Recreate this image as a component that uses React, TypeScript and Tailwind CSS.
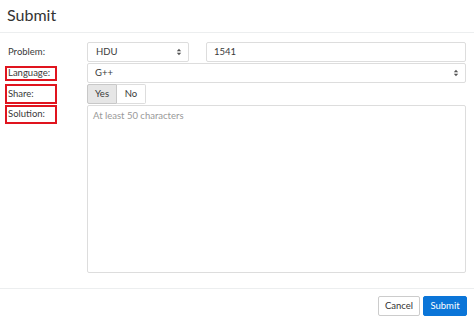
function SelectArrows() {
  return (
    <svg width="6" height="8" viewBox="0 0 6 8" className="text-[#555]">
      <path d="M0.8 3.2 L3 0.8 L5.2 3.2 Z" fill="currentColor" />
      <path d="M0.8 4.8 L3 7.2 L5.2 4.8 Z" fill="currentColor" />
    </svg>
  );
}

export default function App() {
  return (
    <div className="w-[474px] h-[323px] bg-white text-[#3a3a3a] font-['Lato',sans-serif] text-[9.5px] overflow-hidden">
      {/* Header */}
      <div className="h-[33px] border-b border-[#eceeef] px-[7px] pt-[5px]">
        <h1 className="text-[16px] leading-[20px] text-[#333]">Submit</h1>
      </div>

      {/* Body */}
      <div className="pt-[9px] pr-[8px] h-[256px] border-b border-[#eceeef]">
        {/* Problem */}
        <div className="flex items-center h-[20px]">
          <div className="w-[87px] pl-[8px]">Problem:</div>
          <div className="w-[102px] h-[20px] border border-[#ddd] rounded-[2px] flex items-center justify-between pl-[8px] pr-[6px]">
            <span>HDU</span>
            <SelectArrows />
          </div>
          <div className="ml-[17px] flex-1 h-[20px] border border-[#ddd] rounded-[2px] flex items-center pl-[7px]">
            1541
          </div>
        </div>

        {/* Language */}
        <div className="flex items-center h-[20px] mt-[1px]">
          <div className="w-[87px] pl-[5px]">
            <div className="w-[52px] h-[15px] border-2 border-[#e0141e] flex items-center pl-[1px]">Language:</div>
          </div>
          <div className="flex-1 h-[20px] border border-[#ddd] rounded-[2px] flex items-center justify-between pl-[7px] pr-[6px]">
            <span>G++</span>
            <SelectArrows />
          </div>
        </div>

        {/* Share */}
        <div className="flex items-center h-[20px] mt-[1px]">
          <div className="w-[87px] pl-[5px]">
            <div className="w-[52px] h-[20px] border-2 border-[#e0141e] flex items-center pl-[1px]">Share:</div>
          </div>
          <div className="flex h-[20px]">
            <div className="w-[30px] h-[20px] bg-[#e6e6e6] border border-[#c8c8c8] rounded-l-[2px] flex items-center justify-center">Yes</div>
            <div className="w-[29px] h-[20px] bg-white border border-l-0 border-[#ddd] rounded-r-[2px] flex items-center justify-center">No</div>
          </div>
        </div>

        {/* Solution */}
        <div className="flex items-start mt-[1px]">
          <div className="w-[87px] pl-[5px]">
            <div className="w-[52px] h-[19px] border-2 border-[#e0141e] flex items-center pl-[1px]">Solution:</div>
          </div>
          <div className="flex-1 h-[168px] border border-[#ddd] rounded-[2px] pl-[5px] pt-[3px] text-[#999]">
            At least 50 characters
          </div>
        </div>
      </div>

      {/* Footer */}
      <div className="flex justify-end gap-[3px] pr-[7px] pt-[7px]">
        <button className="w-[42px] h-[20px] border border-[#ccc] rounded-[2px] bg-white text-[#333] text-[9.5px]">Cancel</button>
        <button className="w-[44px] h-[20px] border border-[#0b75d8] rounded-[2px] bg-[#0b75d8] text-white text-[9.5px]">Submit</button>
      </div>
    </div>
  );
}
